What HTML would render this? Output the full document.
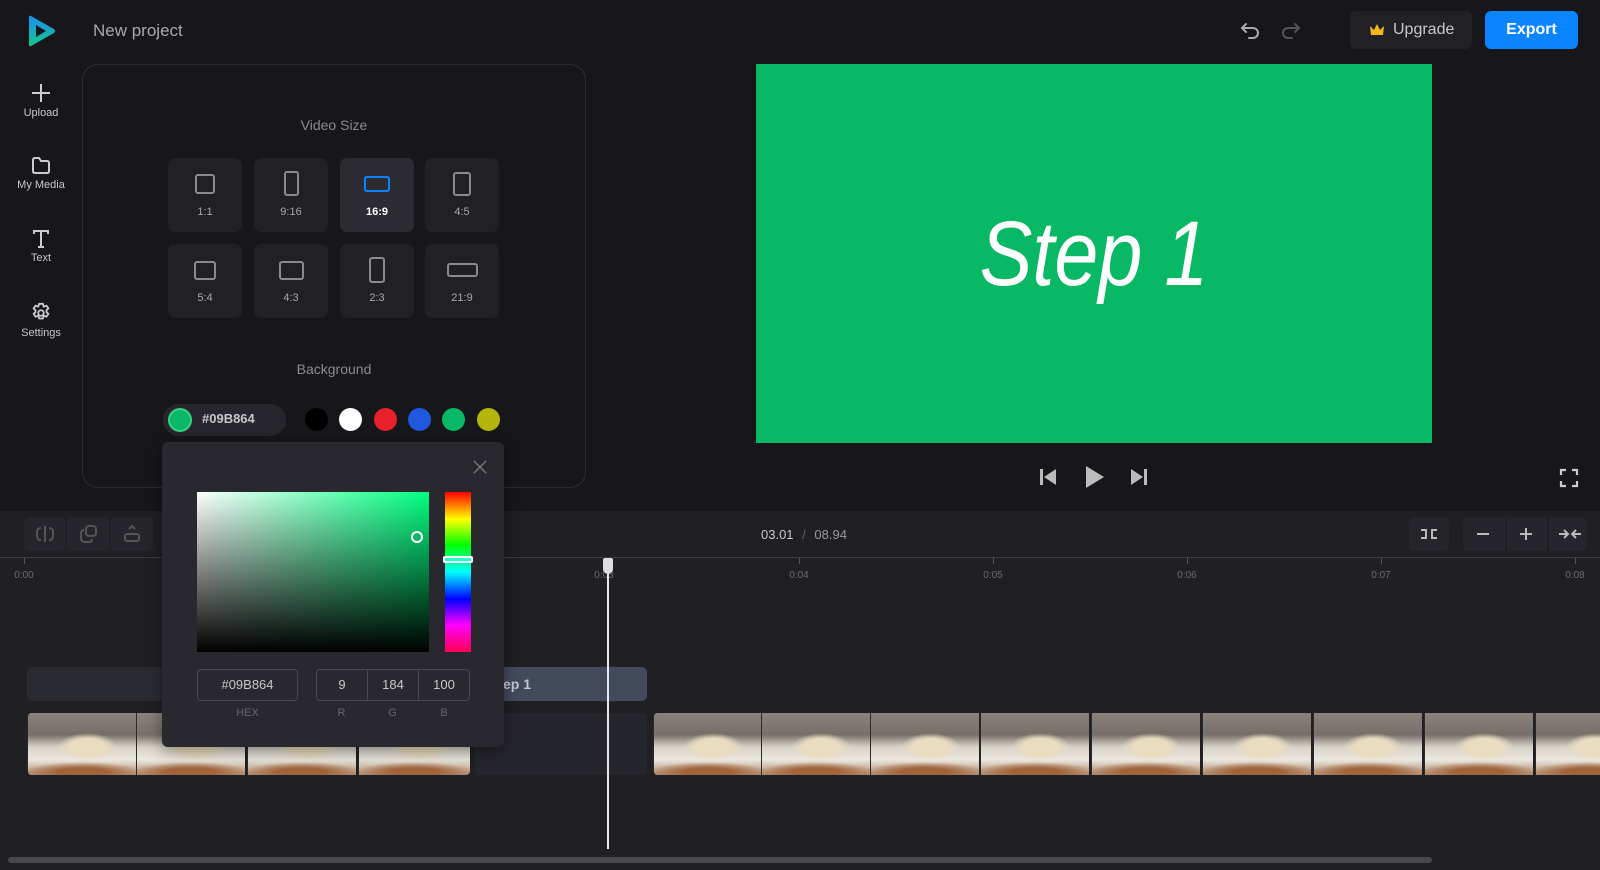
<!DOCTYPE html>
<html><head><meta charset="utf-8"><style>
*{box-sizing:border-box;margin:0;padding:0}
body{width:1600px;height:870px;background:#16161b;font-family:"Liberation Sans",sans-serif;position:relative;overflow:hidden;color:#bbb}
.a{position:absolute}
.side{left:0;width:82px;text-align:center;font-size:11px;color:#c8c8cc}
.side svg{display:block;margin:0 auto 3px}
.tile{position:absolute;width:74px;height:74px;background:#202025;border-radius:7px;text-align:center;font-size:11px;color:#a8a8ad}
.tile .r{margin:0 auto;border:2px solid #8a8a90;border-radius:3px}
.tile span{position:absolute;left:0;right:0;top:48px}
.sw{position:absolute;top:408px;width:23px;height:23px;border-radius:50%}
.tb{position:absolute;top:517px;height:34px;background:#25252b;border-radius:5px}
.tick{position:absolute;top:558px;width:1px;height:6px;background:#555}
.tl{position:absolute;top:570px;font-size:10px;color:#6a6a70;transform:translateX(-50%)}
.th{position:absolute;top:713px;height:62px;width:109px;border-left:1px solid #2a2a2a;background:
radial-gradient(ellipse 30px 14px at 55% 55%,#e9dcc0 60%,transparent 100%),
radial-gradient(ellipse 60px 10px at 50% 95%,#a0643c 40%,transparent 100%),
linear-gradient(180deg,#8a837c 0%,#766f69 35%,#d8d3c9 55%,#ece8e0 75%,#b08c70 100%)}
.inp{position:absolute;top:669px;height:32px;border:1px solid #48484f;font-size:13px;color:#c8c8cc;text-align:center;line-height:30px}
.lab{position:absolute;top:707px;font-size:11px;color:#66666c;text-align:center}
</style></head><body>
<svg class="a" style="left:27px;top:15px" width="30" height="32" viewBox="0 0 30 32"><defs><linearGradient id="lg" x1="0" y1="0" x2="0" y2="1"><stop offset="0" stop-color="#1e8cf0"/><stop offset="1" stop-color="#12c98a"/></linearGradient></defs><path d="M2 2 Q2 0 4 1 L27 14 Q29 16 27 18 L4 31 Q2 32 2 30 Z M9 10 V22 L19 16 Z" fill="url(#lg)" fill-rule="evenodd"/></svg>
<div class="a" style="left:93px;top:21px;font-size:17px;color:#a8a8ad">New project</div>
<svg class="a" style="left:1240px;top:21px" width="22" height="20" viewBox="0 0 22 20" fill="none" stroke="#aaa" stroke-width="2" stroke-linecap="round"><path d="M6 3 L2 7 L6 11 M2 7 H13 a5 5 0 0 1 0 10 H9"/></svg>
<svg class="a" style="left:1279px;top:21px" width="22" height="20" viewBox="0 0 22 20" fill="none" stroke="#555" stroke-width="2" stroke-linecap="round"><path d="M16 3 L20 7 L16 11 M20 7 H9 a5 5 0 0 0 0 10 H13"/></svg>
<div class="a" style="left:1350px;top:11px;width:122px;height:38px;background:#202025;border-radius:6px;color:#c8c8cc;font-size:16px;line-height:38px;padding-left:43px">Upgrade</div>
<svg class="a" style="left:1369px;top:23px" width="16" height="13" viewBox="0 0 16 13"><path d="M1 3 L5 7 L8 1 L11 7 L15 3 L14 12 H2 Z" fill="#f5b819"/></svg>
<div class="a" style="left:1485px;top:11px;width:93px;height:38px;background:#0a84ff;border-radius:6px;color:#fff;font-size:16px;font-weight:bold;line-height:38px;text-align:center">Export</div>
<div class="a side" style="top:82px"><svg width="22" height="22" viewBox="0 0 22 22" stroke="#ccc" stroke-width="2"><path d="M11 2V20M2 11H20"/></svg>Upload</div>
<div class="a side" style="top:156px"><svg width="22" height="20" viewBox="0 0 22 20" fill="none" stroke="#ccc" stroke-width="2"><path d="M3 4 Q3 2 5 2 H9 L11 5 H17 Q19 5 19 7 V15 Q19 17 17 17 H5 Q3 17 3 15 Z"/></svg>My Media</div>
<div class="a side" style="top:229px"><svg width="22" height="20" viewBox="0 0 22 20" fill="none" stroke="#ccc" stroke-width="2"><path d="M4 5V2H18V5M11 2V18M8 18H14"/></svg>Text</div>
<div class="a side" style="top:302px"><svg width="22" height="22" viewBox="0 0 24 24" fill="none" stroke="#ccc" stroke-width="2"><circle cx="12" cy="12" r="3"/><path d="M10 2h4l1 3 3-1 2 3-2 2 0 2 2 2-2 3-3-1-1 3h-4l-1-3-3 1-2-3 2-2v-2l-2-2 2-3 3 1z"/></svg>Settings</div>
<div class="a" style="left:82px;top:64px;width:504px;height:424px;border:1px solid #2c2c33;border-radius:16px"></div>
<div class="a" style="left:82px;top:117px;width:504px;text-align:center;font-size:14px;color:#8a8a90">Video Size</div>
<div class="tile" style="left:168px;top:158px"><div class="r" style="width:20px;height:20px;margin-top:16px"></div><span>1:1</span></div>
<div class="tile" style="left:254px;top:158px"><div class="r" style="width:15px;height:25px;margin-top:13px"></div><span>9:16</span></div>
<div class="tile" style="left:340px;top:158px;background:#2b2b31;color:#fff"><div class="r" style="width:26px;height:16px;margin-top:18px;border-color:#0a84ff"></div><span style="font-weight:bold">16:9</span></div>
<div class="tile" style="left:425px;top:158px"><div class="r" style="width:18px;height:24px;margin-top:14px"></div><span>4:5</span></div>
<div class="tile" style="left:168px;top:244px"><div class="r" style="width:22px;height:19px;margin-top:17px"></div><span>5:4</span></div>
<div class="tile" style="left:254px;top:244px"><div class="r" style="width:25px;height:19px;margin-top:17px"></div><span>4:3</span></div>
<div class="tile" style="left:340px;top:244px"><div class="r" style="width:16px;height:26px;margin-top:13px"></div><span>2:3</span></div>
<div class="tile" style="left:425px;top:244px"><div class="r" style="width:31px;height:14px;margin-top:19px"></div><span>21:9</span></div>
<div class="a" style="left:82px;top:361px;width:504px;text-align:center;font-size:14px;color:#8a8a90">Background</div>
<div class="a" style="left:163px;top:404px;width:123px;height:32px;background:#26262c;border-radius:16px"></div>
<div class="a" style="left:168px;top:408px;width:24px;height:24px;border-radius:50%;background:#09b864;border:2px solid #3acf86"></div>
<div class="a" style="left:202px;top:411px;font-size:13px;font-weight:bold;color:#c8c8cc">#09B864</div>
<div class="sw" style="left:305px;background:#000"></div>
<div class="sw" style="left:339px;background:#fff"></div>
<div class="sw" style="left:374px;background:#e8202a"></div>
<div class="sw" style="left:408px;background:#2058e0"></div>
<div class="sw" style="left:442px;background:#09b864"></div>
<div class="sw" style="left:477px;background:#b5b50d"></div>
<div class="a" style="left:756px;top:64px;width:676px;height:379px;background:#09b864"></div>
<div class="a" style="left:756px;top:202px;width:676px;text-align:center;font-size:92px;font-style:italic;color:#fff;transform:scaleX(0.86)">Step 1</div>
<svg class="a" style="left:1038px;top:467px" width="20" height="20" viewBox="0 0 20 20" fill="#bbb"><rect x="2" y="2" width="3" height="16"/><path d="M18 2V18L6 10Z"/></svg>
<svg class="a" style="left:1083px;top:465px" width="22" height="24" viewBox="0 0 22 24" fill="#bbb"><path d="M3 1V23L21 12Z"/></svg>
<svg class="a" style="left:1129px;top:467px" width="20" height="20" viewBox="0 0 20 20" fill="#bbb"><path d="M2 2V18L14 10Z"/><rect x="15" y="2" width="3" height="16"/></svg>
<svg class="a" style="left:1559px;top:468px" width="20" height="20" viewBox="0 0 20 20" fill="none" stroke="#ccc" stroke-width="2.2"><path d="M2 7V2H7M13 2H18V7M18 13V18H13M7 18H2V13"/></svg>
<div class="a" style="left:0;top:511px;width:1600px;height:359px;background:#1f1f24"></div>
<div class="tb" style="left:24px;width:41px"></div><div class="tb" style="left:67px;width:42px"></div><div class="tb" style="left:111px;width:42px"></div>
<svg class="a" style="left:35px;top:525px" width="20" height="18" viewBox="0 0 20 18" fill="none" stroke="#555" stroke-width="2"><path d="M6 3Q2 3 2 7V11Q2 15 6 15M14 3Q18 3 18 7V11Q18 15 14 15M10 1V17"/></svg>
<svg class="a" style="left:79px;top:524px" width="20" height="20" viewBox="0 0 20 20" fill="none" stroke="#555" stroke-width="2"><rect x="7" y="2" width="10" height="10" rx="3"/><path d="M5 6Q2 6 2 10V14Q2 18 6 18H10Q13 18 13 15"/></svg>
<svg class="a" style="left:122px;top:524px" width="20" height="20" viewBox="0 0 20 20" fill="none" stroke="#555" stroke-width="2"><path d="M7 5L10 2L13 5"/><rect x="3" y="10" width="14" height="7" rx="2"/></svg>
<div class="a" style="left:761px;top:527px;font-size:13px;color:#c8c8cc">03.01 <span style="color:#666;margin:0 5px">/</span> <span style="color:#999">08.94</span></div>
<div class="tb" style="left:1409px;width:40px"></div>
<div class="tb" style="left:1463px;width:124px"></div>
<div class="a" style="left:1505px;top:517px;width:2px;height:34px;background:#1f1f24"></div><div class="a" style="left:1547px;top:517px;width:2px;height:34px;background:#1f1f24"></div>
<svg class="a" style="left:1419px;top:527px" width="20" height="14" viewBox="0 0 20 14" fill="none" stroke="#bbb" stroke-width="2"><path d="M2 3H7V11H2M18 3H13V11H18"/></svg>
<svg class="a" style="left:1476px;top:527px" width="14" height="14" viewBox="0 0 14 14" stroke="#bbb" stroke-width="2"><path d="M1 7H13"/></svg>
<svg class="a" style="left:1519px;top:527px" width="14" height="14" viewBox="0 0 14 14" stroke="#bbb" stroke-width="2"><path d="M1 7H13M7 1V13"/></svg>
<svg class="a" style="left:1558px;top:527px" width="24" height="14" viewBox="0 0 24 14" fill="none" stroke="#bbb" stroke-width="2"><path d="M1 7H10M6 3L10 7L6 11M23 7H14M18 3L14 7L18 11"/></svg>
<div class="a" style="left:0;top:557px;width:1600px;height:1px;background:#3a3a40"></div>
<div class="tick" style="left:24px"></div><div class="tl" style="left:24px">0:00</div>
<div class="tick" style="left:604px"></div><div class="tl" style="left:604px">0:03</div>
<div class="tick" style="left:799px"></div><div class="tl" style="left:799px">0:04</div>
<div class="tick" style="left:993px"></div><div class="tl" style="left:993px">0:05</div>
<div class="tick" style="left:1187px"></div><div class="tl" style="left:1187px">0:06</div>
<div class="tick" style="left:1381px"></div><div class="tl" style="left:1381px">0:07</div>
<div class="tick" style="left:1575px"></div><div class="tl" style="left:1575px">0:08</div>
<div class="a" style="left:27px;top:667px;width:620px;height:34px;background:#2a2b31;border-radius:5px"></div>
<div class="a" style="left:470px;top:667px;width:177px;height:34px;background:#434a5c;border-radius:0 5px 5px 0;color:#c4c8d4;font-size:14px;font-weight:bold;line-height:34px;padding-left:19px">Step 1</div>
<div class="a" style="left:475px;top:713px;width:172px;height:62px;background:#25262c;border-radius:5px"></div>
<div class="th" style="left:27px;border-radius:4px 0 0 4px"></div><div class="th" style="left:136px"></div><div class="th" style="left:247px"></div><div class="th" style="left:358px;width:112px;border-radius:0 4px 4px 0"></div>
<div class="th" style="left:653px;border-radius:4px 0 0 4px"></div><div class="th" style="left:761px"></div><div class="th" style="left:870px"></div><div class="th" style="left:980px"></div><div class="th" style="left:1091px"></div><div class="th" style="left:1202px"></div><div class="th" style="left:1313px"></div><div class="th" style="left:1424px"></div><div class="th" style="left:1535px"></div>
<div class="a" style="left:607px;top:559px;width:2px;height:290px;background:#e8e8ea"></div>
<div class="a" style="left:603px;top:558px;width:10px;height:16px;background:#ddd;border-radius:2px 2px 5px 5px"></div>
<div class="a" style="left:8px;top:857px;width:1424px;height:6px;background:#48484e;border-radius:3px"></div>
<div class="a" style="left:162px;top:442px;width:342px;height:305px;background:#28282e;border-radius:6px;box-shadow:0 4px 16px rgba(0,0,0,.4)"></div>
<svg class="a" style="left:473px;top:460px" width="14" height="14" viewBox="0 0 14 14" stroke="#777" stroke-width="1.5"><path d="M1 1L13 13M13 1L1 13"/></svg>
<div class="a" style="left:197px;top:492px;width:232px;height:160px;background:linear-gradient(to top,#000,transparent),linear-gradient(to right,#fff,#00ff80)"></div>
<div class="a" style="left:411px;top:531px;width:12px;height:12px;border:2px solid #fff;border-radius:50%"></div>
<div class="a" style="left:445px;top:492px;width:26px;height:160px;background:linear-gradient(#f00,#ff0 17%,#0f0 33%,#0ff 50%,#00f 67%,#f0f 83%,#f05)"></div>
<div class="a" style="left:443px;top:556px;width:30px;height:7px;border:2px solid #fff;border-radius:2px;background:#2fc"></div>
<div class="inp" style="left:197px;width:101px;border-radius:4px">#09B864</div>
<div class="inp" style="left:316px;width:52px;border-radius:4px 0 0 4px">9</div>
<div class="inp" style="left:367px;width:52px;border-left:1px solid #48484f">184</div>
<div class="inp" style="left:418px;width:52px;border-radius:0 4px 4px 0">100</div>
<div class="lab" style="left:197px;width:101px">HEX</div>
<div class="lab" style="left:316px;width:51px">R</div>
<div class="lab" style="left:367px;width:51px">G</div>
<div class="lab" style="left:418px;width:52px">B</div>
</body></html>
